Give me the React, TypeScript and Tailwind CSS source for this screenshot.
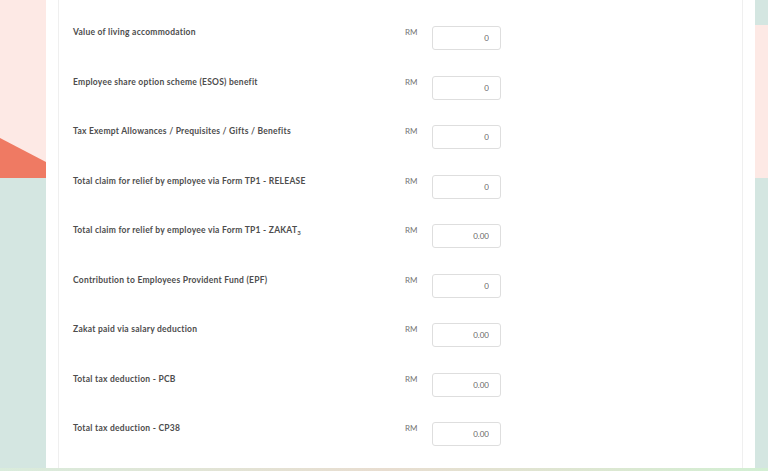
import type { ReactNode } from "react";

type Row = { label: ReactNode; value: string };

const rows: Row[] = [
  { label: "Value of living accommodation", value: "0" },
  { label: "Employee share option scheme (ESOS) benefit", value: "0" },
  { label: "Tax Exempt Allowances / Prequisites / Gifts / Benefits", value: "0" },
  { label: "Total claim for relief by employee via Form TP1 - RELEASE", value: "0" },
  {
    label: (
      <>
        Total claim for relief by employee via Form TP1 - ZAKAT
        <sub className="text-[6px]">3</sub>
      </>
    ),
    value: "0.00",
  },
  { label: "Contribution to Employees Provident Fund (EPF)", value: "0" },
  { label: "Zakat paid via salary deduction", value: "0.00" },
  { label: "Total tax deduction - PCB", value: "0.00" },
  { label: "Total tax deduction - CP38", value: "0.00" },
];

function FieldRow({ label, value }: Row) {
  return (
    <div className="flex h-[49.5px] shrink-0 items-start">
      <div className="w-[332px] text-[8.5px] leading-[12px] font-bold tracking-[0.25px] text-[#4d4d4d]">{label}</div>
      <div className="w-[27px] text-[8px] leading-[12px] text-[#737373]">RM</div>
      <input
        readOnly
        value={value}
        className="h-[24px] w-[69px] rounded-[3px] border border-[#dedede] bg-white pr-[11px] text-right text-[8px] text-[#666] outline-none"
      />
    </div>
  );
}

export default function App() {
  return (
    <div
      className="flex h-[471px] w-[768px] flex-col overflow-hidden bg-[#d4e6e1]"
      style={{ fontFamily: "Lato, 'Open Sans', sans-serif" }}
    >
      <div className="flex min-h-0 flex-1">
        {/* left backdrop */}
        <div className="flex w-[46px] shrink-0 flex-col">
          <div className="h-[138px] bg-[#fde9e5]" />
          <svg width="46" height="24" viewBox="0 0 46 24" className="block">
            <rect width="46" height="24" fill="#fde9e5" />
            <polygon points="0,0 46,24 0,24" fill="#ef7a63" />
          </svg>
          <div className="h-[16px] bg-[#ef7a63]" />
          <div className="flex-1 bg-[#d4e6e1]" />
        </div>

        {/* card */}
        <div className="flex w-[709px] shrink-0 bg-white px-[12px]">
          <div className="flex flex-1 flex-col border-x border-[#efefef] pt-[26px] pl-[14px]">
            {rows.map((r, i) => (
              <FieldRow key={i} {...r} />
            ))}
          </div>
        </div>

        {/* right backdrop */}
        <div className="flex flex-1 flex-col">
          <div className="h-[25px] bg-[#d4e6e1]" />
          <div className="h-[153px] bg-[#fde9e5]" />
          <div className="flex-1 bg-[#d4e6e1]" />
        </div>
      </div>
      <div className="h-[3px] shrink-0 bg-gradient-to-r from-[#d9ecdc] via-[#e8ddd0] to-[#d2efd3]" />
    </div>
  );
}
